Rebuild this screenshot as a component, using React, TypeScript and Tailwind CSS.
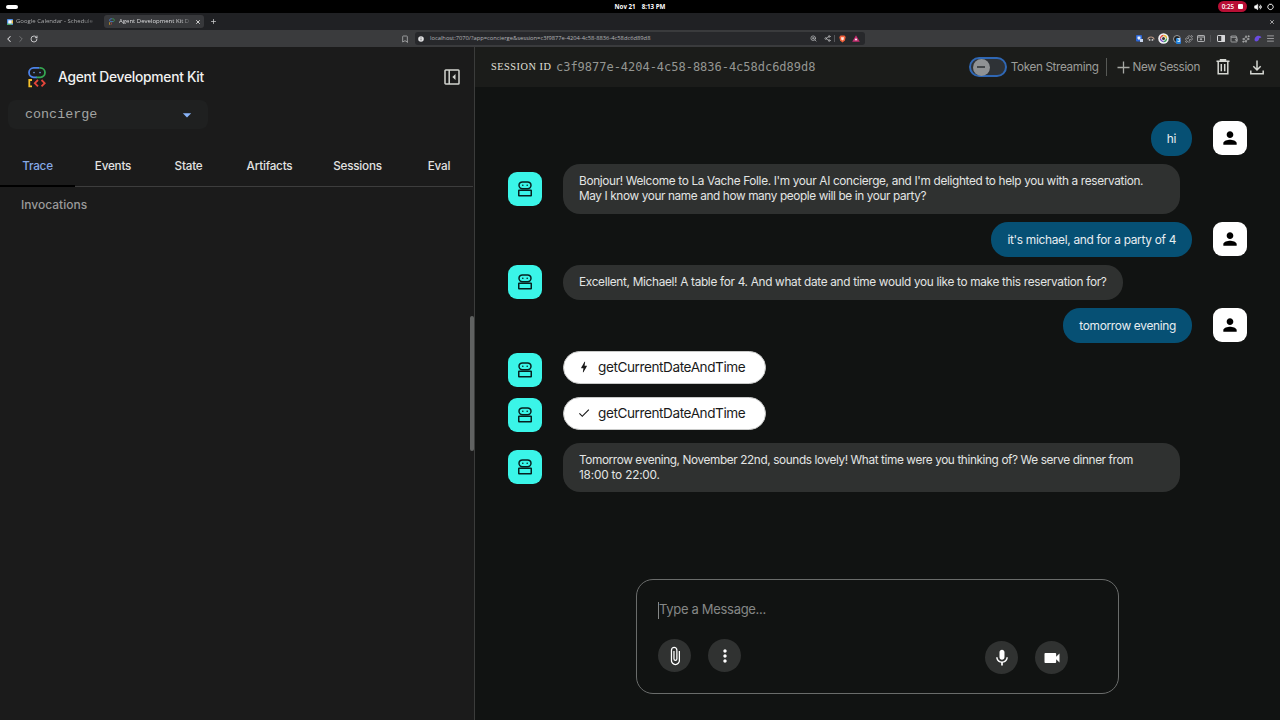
import type { ReactNode } from "react";
import {
  MdArrowDropDown,
  MdAttachFile,
  MdBolt,
  MdCheck,
  MdMic,
  MdMoreVert,
  MdPerson,
  MdVideocam,
} from "react-icons/md";
import {
  Bookmark,
  ChevronLeft,
  ChevronRight,
  Menu,
  Plus,
  Puzzle,
  RotateCw,
  Share2,
  Sparkles,
  Volume2,
  Wallet,
  X,
  ZoomIn,
} from "lucide-react";

function RobotIcon() {
  return (
    <svg width="14" height="16" viewBox="0 0 14 16" fill="none" stroke="#06201f" strokeWidth="1.5">
      <rect x="1" y="0.9" width="12" height="6.8" rx="3.4" />
      <rect x="0.75" y="9.3" width="12.5" height="5.400" rx="0.3" />
      <circle cx="4.8" cy="4.3" r="0.8" fill="#06201f" stroke="none" />
      <circle cx="9.2" cy="4.3" r="0.8" fill="#06201f" stroke="none" />
    </svg>
  );
}

function AdkLogo() {
  return (
    <svg width="20" height="22" viewBox="0 0 20 22" fill="none" strokeWidth="1.8">
      <path d="M12.500 1.900H6.700a4.700 4.700 0 0 0 0 9.400H10" stroke="#4c83ea" />
      <path d="M12.500 1.900h.8a4.700 4.700 0 0 1 0 9.400H9.500" stroke="#35a853" />
      <circle cx="7" cy="6.6" r="0.8" fill="#6f9fe8" />
      <circle cx="13" cy="6.6" r="0.8" fill="#6f9fe8" />
      <path d="M5 14H2.300v6.400H5" stroke="#f6c12b" />
      <path d="m11 14-3.200 3.200 3.200 3.200" stroke="#e5453a" />
      <path d="m14.500 14 3.200 3.200-3.200 3.200" stroke="#e5453a" />
    </svg>
  );
}

function SystemBar() {
  return (
    <div className="grid h-[13px] shrink-0 grid-cols-3 items-center bg-black font-['Open_Sans',sans-serif] text-[6.2px] font-bold text-white">
      <div className="pl-[6px]">
        <div className="h-[4px] w-[12px] rounded-full bg-white" />
      </div>
      <div className="flex justify-center gap-[6px]">
        <span>Nov 21</span>
        <span>8:13 PM</span>
      </div>
      <div className="flex items-center justify-end pr-[6px]">
        <div className="flex h-[11px] w-[29px] items-center justify-center gap-[4px] rounded-full bg-[#b80f35] font-semibold">
          <span>0:25</span>
          <div className="size-[5px] rounded-[1px] bg-white" />
        </div>
        <Volume2 size={8} className="ml-[7px] fill-white" />
        <svg width="7" height="8" viewBox="0 0 7 8" fill="none" stroke="#fff" className="ml-[5px]">
          <path d="M2.200 1.500a2.700 2.700 0 1 0 2.600 0" />
          <path d="M2.200 1.300h2.600" />
        </svg>
      </div>
    </div>
  );
}

function TabStrip() {
  return (
    <div className="flex h-[17px] shrink-0 items-center bg-[#202124] font-['Open_Sans',sans-serif] text-[6px]">
      <div className="flex w-[104px] items-center pl-[7px]">
        <svg width="6" height="6" viewBox="0 0 6 6" className="shrink-0">
          <rect width="6" height="6" rx="0.8" fill="#4f8fe8" />
          <path d="M0 4.500h4.500V6H.8A.8.8 0 0 1 0 5.200z" fill="#4caf66" />
          <path d="M4.500 1.200H6v3.300H4.500z" fill="#f4c542" />
          <rect x="1.300" y="1.300" width="3.200" height="3.200" fill="#fff" />
        </svg>
        <span className="ml-[3px] bg-gradient-to-r from-[#b5b6b8] from-85% to-[#5a5b5d] bg-clip-text whitespace-nowrap text-transparent">
          Google Calendar - Schedule
        </span>
      </div>
      <div className="flex h-[13px] w-[100px] items-center rounded-[3px] bg-[#37383b] pl-[5px]">
        <svg width="6" height="7" viewBox="0 0 6 7" fill="none" strokeWidth="0.800" className="shrink-0">
          <path d="M3 .8H2a1.400 1.400 0 0 0 0 2.800h2" stroke="#4c7fd0" />
          <path d="M3 .8h1a1.400 1.400 0 0 1 0 2.800" stroke="#3d9a54" />
          <path d="M1.300 4.500H.5v2h.8" stroke="#c89a2a" />
          <path d="m3 4.600-1 .9 1 .9" stroke="#b94a40" />
        </svg>
        <span className="ml-[4px] bg-gradient-to-r from-[#f0f0f2] from-88% to-[#6a6b6d] bg-clip-text font-medium whitespace-nowrap text-transparent">
          Agent Development Kit D
        </span>
        <X size={6} strokeWidth={3} className="mr-[3px] ml-auto shrink-0 text-white" />
      </div>
      <Plus size={7} strokeWidth={2.500} className="ml-[6px] text-[#d0d0d2]" />
      <X size={6} strokeWidth={3} className="mr-[5px] ml-auto text-[#d0d0d2]" />
    </div>
  );
}

function BrowserBar() {
  return (
    <div className="flex h-[17px] shrink-0 items-center bg-[#3a3b3d] text-[#b9babc]">
      <ChevronLeft size={10} strokeWidth={2.500} className="ml-[4px] text-[#dcdcde]" />
      <ChevronRight size={10} strokeWidth={2} className="ml-[2px] text-[#7b7c7e]" />
      <RotateCw size={8} strokeWidth={2.500} className="ml-[4px] text-[#dcdcde]" />
      <Bookmark size={8} strokeWidth={2.200} className="ml-[363px]" />
      <div className="ml-[6px] flex h-[13px] w-[450px] items-center rounded-[3px] bg-[#27282b] pl-[3px]">
        <svg width="6" height="6" viewBox="0 0 6 6">
          <circle cx="3" cy="3" r="2.800" fill="#e3e3e5" />
          <path d="M3 2.600v1.800M3 1.400v.7" stroke="#333" strokeWidth="0.700" />
        </svg>
        <span className="ml-[6px] font-['Open_Sans',sans-serif] text-[5.780px] whitespace-nowrap text-[#b4b5b8]">
          localhost:7070/?app=concierge&amp;session=c3f9877e-4204-4c58-8836-4c58dc6d89d8
        </span>
        <div className="mr-[5px] ml-auto flex items-center">
          <ZoomIn size={7} strokeWidth={2.500} />
          <Share2 size={7} strokeWidth={2.500} className="ml-[7px]" />
          <div className="ml-[3px] h-[7px] w-px bg-[#55565a]" />
          <svg width="7" height="8" viewBox="0 0 7 8" className="ml-[4px]">
            <path d="M1.500.5h4L6.700 2 5.900 5.500 3.500 7.500 1.100 5.500.3 2z" fill="#f0603a" />
            <path d="M2 2.300h3L4.600 4.500l-1.100 1-1.100-1z" fill="#ffe9e2" />
          </svg>
          <svg width="8" height="7" viewBox="0 0 8 7" className="ml-[6px]">
            <path d="M4 .3 7.800 6.700H.2z" fill="#c22b6e" />
            <path d="M4 2.900 5.400 5.200H2.600z" fill="#fff" />
          </svg>
        </div>
      </div>
      <div className="mr-[5px] ml-auto flex items-center">
        <svg width="7" height="7" viewBox="0 0 7 7">
          <rect width="6" height="6.500" rx="1" fill="#2c66d6" />
          <path d="M1.500 1.500h3v2L3 5 1.500 3.800z" fill="#e9effb" />
          <rect x="4" y="4" width="3" height="3" fill="#c8d4ea" />
        </svg>
        <svg width="8" height="6" viewBox="0 0 8 6" fill="none" className="ml-[4px]">
          <path d="M1 3.500a3 2.500 0 0 1 6 0" stroke="#b89684" strokeWidth="1.200" />
          <circle cx="2.600" cy="3.900" r="0.900" fill="#ccc" />
          <circle cx="5.400" cy="3.900" r="0.900" fill="#ccc" />
        </svg>
        <svg width="11" height="11" viewBox="0 0 11 11" className="ml-[3px]">
          <circle cx="5.500" cy="5.500" r="5.300" fill="#f3f3f5" />
          <path d="M2.500 5.500a3 3 0 0 1 3-3" stroke="#e0483e" strokeWidth="1.300" fill="none" />
          <path d="M5.500 2.500a3 3 0 0 1 3 3" stroke="#e5b52f" strokeWidth="1.300" fill="none" />
          <path d="M8.500 5.500a3 3 0 0 1-3 3" stroke="#39a35a" strokeWidth="1.300" fill="none" />
          <path d="M5.500 8.500a3 3 0 0 1-3-3" stroke="#7145c8" strokeWidth="1.300" fill="none" />
          <circle cx="5.500" cy="5.500" r="1.500" fill="#333" />
        </svg>
        <div className="relative ml-[4px] size-[8px] rounded-full border border-[#9b9b9d] bg-[#222]">
          <span className="absolute top-[2px] left-[2px] flex h-[6px] w-[5px] items-center justify-center rounded-[1px] bg-[#2580d8] text-[5px] font-bold text-white">
            3
          </span>
        </div>
        <Puzzle size={8} strokeWidth={2.200} className="ml-[4px]" />
        <svg width="8" height="7" viewBox="0 0 8 7" fill="none" stroke="#b9babc" strokeWidth="0.900" className="ml-[4px]">
          <rect x=".5" y=".5" width="7" height="6" rx=".6" />
          <path d="M.5 2h7M4 3v2.400M2.800 4.300h2.400" />
        </svg>
        <div className="ml-[5px] h-[7px] w-px bg-[#505154]" />
        <svg width="8" height="7" viewBox="0 0 8 7" fill="none" stroke="#d8d8da" strokeWidth="1" className="ml-[6px]">
          <rect x=".5" y=".5" width="7" height="6" rx=".6" />
          <path d="M4.800.5h2.700v6H4.800z" fill="#d8d8da" />
        </svg>
        <Wallet size={8} strokeWidth={2.200} className="ml-[5px]" />
        <Sparkles size={8} strokeWidth={2.200} className="ml-[4px]" />
        <svg width="8" height="7" viewBox="0 0 8 7" className="ml-[4px]">
          <path d="M.6 5.500C.3 2.500 2.300.8 4.600.8 6 .8 7 1.500 7.400 2.500L5.200 3.200c0 2-1.700 3.300-3.300 3.300z" fill="#6a4be0" />
        </svg>
        <Menu size={9} strokeWidth={2} className="ml-[4px]" />
      </div>
    </div>
  );
}

const tabs = [
  { label: "Trace", width: "w-[75px]", color: "text-[#86a9e6]" },
  { label: "Events", width: "w-[76px]", color: "text-[#e2e2e2]" },
  { label: "State", width: "w-[75px]", color: "text-[#e2e2e2]" },
  { label: "Artifacts", width: "w-[87px]", color: "text-[#e2e2e2]" },
  { label: "Sessions", width: "w-[89px]", color: "text-[#e2e2e2]" },
  { label: "Eval", width: "w-[74px]", color: "text-[#e2e2e2]" },
];

function SidePanel() {
  return (
    <aside className="flex w-[475px] shrink-0 border-r border-[#3b3c3b] bg-[#1b1b1b]">
      <div className="flex min-w-0 flex-1 flex-col">
        <div className="mt-[18px] flex h-[24px] items-center pl-[27px]">
          <AdkLogo />
          <h1 className="ml-[11px] pt-px text-[13.800px] font-medium tracking-[-0.020em] whitespace-nowrap text-[#f1f1f1]">
            Agent Development Kit
          </h1>
          <svg width="16" height="16" viewBox="0 0 16 16" fill="none" stroke="#d3d5d0" strokeWidth="1.500" className="mr-[13px] ml-auto">
            <rect x="1" y="1" width="14" height="14" rx="0.800" />
            <path d="M5.200 1v14" />
            <path d="M11.500 5v6L8.300 8z" fill="#d3d5d0" stroke="none" />
          </svg>
        </div>
        <div className="mt-[11px] ml-[8px] flex h-[29px] w-[200px] items-center rounded-[8px] bg-[#1f2020] pr-[11px] pl-[17px]">
          <span className="pt-[2px] font-['Liberation_Mono',monospace] text-[13.400px] text-[#a3a5a3]">concierge</span>
          <MdArrowDropDown size={20} className="ml-auto text-[#8ab4f8]" />
        </div>
        <nav className="mt-[16px] flex h-[42px] border-b border-[#3d3d3d]">
          {tabs.map((tab) => (
            <div
              key={tab.label}
              className={`${tab.width} ${tab.color} flex shrink-0 items-center justify-center pt-[2px] text-[11.700px] font-medium tracking-[-0.018em] first:-mb-px first:border-b-2 first:border-black first:pt-[3px]`}
            >
              {tab.label}
            </div>
          ))}
        </nav>
        <h2 className="mt-[9px] pl-[21px] text-[12px] leading-[18px] font-medium text-[#9a9a9a]">Invocations</h2>
      </div>
      <div className="mt-[269px] -ml-[3px] h-[135px] w-[4px] rounded-[2px] bg-[#606261]" />
    </aside>
  );
}

function SessionHeader() {
  return (
    <header className="flex h-[40px] shrink-0 items-center bg-[#1b1c1a] pl-[16px] text-[#9b9d99]">
      <span className="w-[61px] font-['Liberation_Serif',serif] text-[10.300px] tracking-[0.050em] whitespace-nowrap text-[#e0e0dc]">
        SESSION ID
      </span>
      <span className="ml-[4px] font-['DejaVu_Sans_Mono',monospace] text-[12px] tracking-[-0.020px] whitespace-nowrap text-[#949692]">
        c3f9877e-4204-4c58-8836-4c58dc6d89d8
      </span>
      <div className="mr-[16px] ml-auto flex items-center">
        <div className="flex h-[20px] w-[38px] items-center rounded-full border-2 border-[#2f67b4] bg-[#2e3236] pl-[2px]">
          <div className="flex size-[17px] items-center justify-center rounded-full bg-[#8f9294]">
            <div className="h-[1.500px] w-[8px] bg-[#44484b]" />
          </div>
        </div>
        <span className="ml-[4px] pt-[2px] text-[11.700px] tracking-[-0.029em]">Token Streaming</span>
        <div className="ml-[7px] h-[18px] w-px bg-[#575956]" />
        <svg width="13" height="13" viewBox="0 0 13 13" stroke="#a7a9a5" strokeWidth="1.300" className="ml-[10px]">
          <path d="M6.500.5v12M.5 6.500h12" />
        </svg>
        <span className="ml-[3px] pt-[2px] text-[11.700px] tracking-[-0.033em]">New Session</span>
        <svg width="14" height="16" viewBox="0 0 14 16" fill="none" stroke="#d5d7d2" strokeWidth="1.500" className="ml-[16px]">
          <path d="M.5 2.300h13M4.500 2V.8h5V2M2.200 2.500v12.300h9.600V2.500M5.300 5v7.300M8.700 5v7.300" />
        </svg>
        <svg width="14" height="15" viewBox="0 0 14 15" fill="none" stroke="#d5d7d2" strokeWidth="1.500" className="ml-[20px]">
          <path d="M7 .5v9.300M3.300 6.300 7 10l3.700-3.700M.8 10.500v3.300h12.400v-3.300" />
        </svg>
      </div>
    </header>
  );
}

function UserMessage({ children, className }: { children: ReactNode; className: string }) {
  return (
    <div className={`flex h-[35px] items-center justify-end pr-[33px] ${className}`}>
      <div className="flex h-[35px] items-center rounded-[17px] bg-[#065074] px-[16px] pt-px text-[11.900px] tracking-[-0.026em] whitespace-nowrap text-[#e6edf1]">
        {children}
      </div>
      <div className="mb-px ml-[21px] flex size-[34px] items-center justify-center rounded-[9px] bg-white text-black">
        <MdPerson size={20} />
      </div>
    </div>
  );
}

function BotMessage({ children, className }: { children: ReactNode; className: string }) {
  return (
    <div className={`flex items-center pl-[33px] ${className}`}>
      <div className="flex size-[34px] shrink-0 items-center justify-center rounded-[9px] bg-[#3af5e8]">
        <RobotIcon />
      </div>
      {children}
    </div>
  );
}

const botBubble =
  "ml-[21px] flex flex-col justify-center rounded-[17px] bg-[#2f3130] px-[16px] text-[11.800px] leading-[14.700px] whitespace-nowrap text-[#e3e5e4]";
const functionChip =
  "mb-[5px] ml-[21px] flex h-[33px] w-[203px] items-center rounded-full border border-[#c9cac9] bg-white pl-[13px] text-[13.600px] tracking-[-0.031em] whitespace-nowrap text-[#1a1a1a]";

function Conversation() {
  return (
    <div className="flex flex-col pt-[34px]">
      <UserMessage className="">hi</UserMessage>
      <BotMessage className="mt-[8px] h-[50px]">
        <div className={`${botBubble} h-[50px] w-[617px] tracking-[-0.028em]`}>
          <p>Bonjour! Welcome to La Vache Folle. I'm your AI concierge, and I'm delighted to help you with a reservation.</p>
          <p className="tracking-[-0.032em]">May I know your name and how many people will be in your party?</p>
        </div>
      </BotMessage>
      <UserMessage className="mt-[8px]">it's michael, and for a party of 4</UserMessage>
      <BotMessage className="mt-[8px] h-[35px] [&>div:first-child]:mb-px">
        <div className={`${botBubble} h-[35px] w-[560px] tracking-[-0.026em]`}>
          Excellent, Michael! A table for 4. And what date and time would you like to make this reservation for?
        </div>
      </BotMessage>
      <UserMessage className="mt-[8px]">tomorrow evening</UserMessage>
      <BotMessage className="mt-[8px] h-[37px]">
        <div className={functionChip}>
          <MdBolt size={14} />
          <span className="ml-[7px]">getCurrentDateAndTime</span>
        </div>
      </BotMessage>
      <BotMessage className="mt-[9px] h-[37px] [&>div:first-child]:mb-px">
        <div className={functionChip}>
          <MdCheck size={14} />
          <span className="ml-[7px]">getCurrentDateAndTime</span>
        </div>
      </BotMessage>
      <BotMessage className="mt-[9px] h-[49px] [&>div:first-child]:mb-px">
        <div className={`${botBubble} h-[49px] w-[617px] tracking-[-0.033em]`}>
          <p>Tomorrow evening, November 22nd, sounds lovely! What time were you thinking of? We serve dinner from</p>
          <p className="tracking-[-0.016em]">18:00 to 22:00.</p>
        </div>
      </BotMessage>
    </div>
  );
}

function RoundButton({ children }: { children: ReactNode }) {
  return (
    <button className="flex size-[33px] items-center justify-center rounded-full bg-[#303231] text-white">
      {children}
    </button>
  );
}

function Composer() {
  return (
    <div className="mt-auto mb-[26px] ml-[161px] flex h-[115px] w-[483px] flex-col rounded-[17px] border border-[#6a6c6b] px-[21px]">
      <div className="mt-[20px] flex h-[20px] items-center">
        <div className="h-[17px] w-px bg-[#858786]" />
        <span className="text-[13px] tracking-[-0.024em] text-[#858786]">Type a Message...</span>
      </div>
      <div className="mt-[19px] flex">
        <div className="flex gap-[17px]">
          <RoundButton>
            <MdAttachFile size={20} />
          </RoundButton>
          <RoundButton>
            <MdMoreVert size={20} />
          </RoundButton>
        </div>
        <div className="mt-[2px] mr-[29px] ml-auto flex gap-[17px]">
          <RoundButton>
            <MdMic size={20} />
          </RoundButton>
          <RoundButton>
            <MdVideocam size={20} />
          </RoundButton>
        </div>
      </div>
    </div>
  );
}

export default function App() {
  return (
    <div className="flex h-[720px] w-[1280px] flex-col overflow-hidden bg-[#111312] font-['Inter','Liberation_Sans',sans-serif]">
      <SystemBar />
      <TabStrip />
      <BrowserBar />
      <div className="flex min-h-0 flex-1">
        <SidePanel />
        <main className="flex min-w-0 flex-1 flex-col">
          <SessionHeader />
          <Conversation />
          <Composer />
        </main>
      </div>
    </div>
  );
}
